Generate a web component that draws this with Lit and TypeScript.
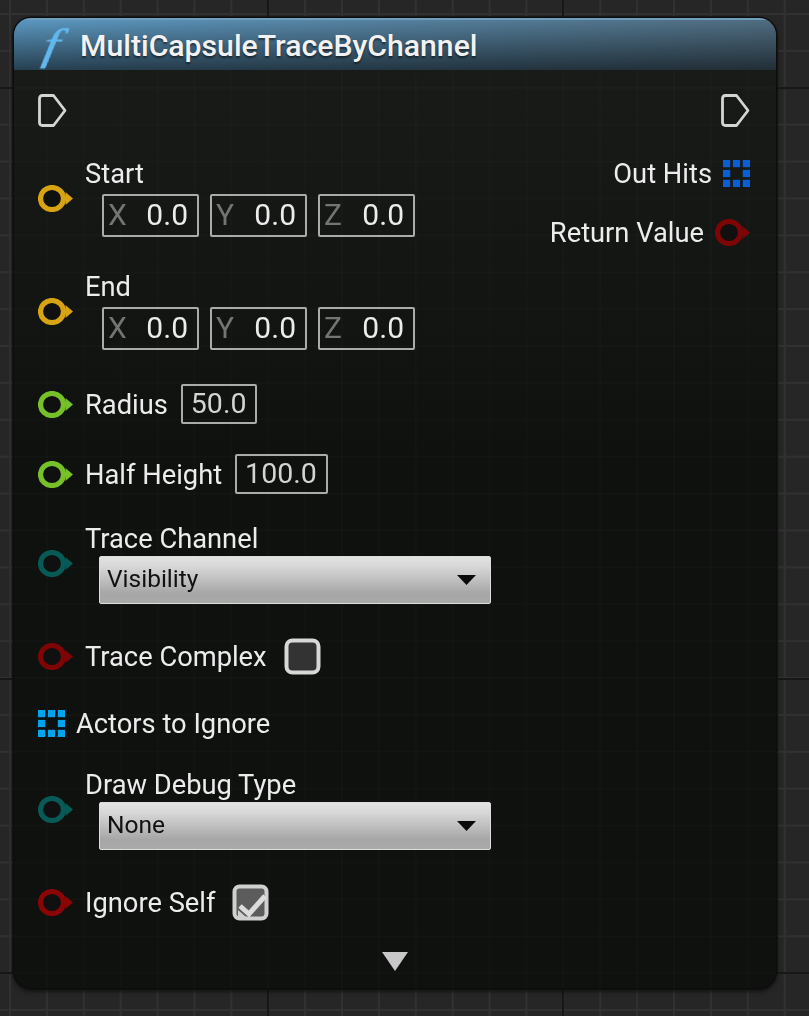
import { LitElement, html, css, svg } from 'lit'
import { customElement } from 'lit/decorators.js'

const execPin = html`
  <svg class="exec" viewBox="0 0 29 33">
    <path d="M4.5 1.5H15.5L27 16.5L15.5 31.5H4.5Q1.5 31.5 1.5 28.5V4.5Q1.5 1.5 4.5 1.5Z" fill="none" stroke="#d4d4d4" stroke-width="2.8" stroke-linejoin="round"/>
  </svg>`

const pin = (color: string) => html`
  <svg class="pin" viewBox="0 0 35 27">
    <path d="M27.5 7L35 13.5L27.5 20Z" fill="${color}"/>
    <ellipse cx="14" cy="13.5" rx="11.5" ry="11" fill="#0f100f" stroke="${color}" stroke-width="5.2"/>
  </svg>`

const arrayPin = (color: string) => {
  const cells = [[0, 0], [1, 0], [2, 0], [0, 1], [2, 1], [0, 2], [1, 2], [2, 2]]
  return html`
    <svg class="array" viewBox="0 0 27 27">
      ${cells.map(([c, r]) => svg`<rect x="${c * 9.9}" y="${r * 9.9}" width="7.2" height="7.2" fill="${color}"/>`)}
    </svg>`
}

@customElement('app-root')
export class AppRoot extends LitElement {
  static styles = css`
    :host {
      display: block;
      width: 809px;
      height: 1016px;
      overflow: hidden;
      font-family: Roboto, sans-serif;
      color: #ececec;
    }
    .canvas {
      height: 100%;
      box-sizing: border-box;
      padding: 18px 0 0 14px;
      background-color: #262626;
      background-image:
        linear-gradient(#171717 0 0), linear-gradient(#171717 0 0),
        linear-gradient(#171717 0 0), linear-gradient(#171717 0 0),
        linear-gradient(#171717 0 0),
        linear-gradient(90deg, #313131 2px, transparent 2px),
        linear-gradient(#313131 2px, transparent 2px);
      background-size: 2px 100%, 2px 100%, 100% 2px, 100% 2px, 100% 2px, 36.9px 36.9px, 36.9px 36.9px;
      background-position: 267px 0, 562px 0, 0 87px, 0 678px, 0 972px, 9px 0, 0 13px;
      background-repeat: no-repeat, no-repeat, no-repeat, no-repeat, no-repeat, repeat, repeat;
    }
    .node {
      width: 762px;
      height: 970px;
      box-sizing: border-box;
      display: flex;
      flex-direction: column;
      border-radius: 17px;
      overflow: hidden;
      background-color: #0f110f;
      background-image:
        linear-gradient(90deg, rgba(255, 255, 255, 0.012) 2px, transparent 2px),
        linear-gradient(rgba(255, 255, 255, 0.012) 2px, transparent 2px),
        linear-gradient(#1a1c1a, #0f110f 45%);
      background-size: 36.9px 36.9px, 36.9px 36.9px, auto;
      background-position: -5px 0, 0 -5px, 0 0;
      box-shadow: 0 0 0 1.5px #0d0d0d, 0 3px 5px #0d0d0d;
      filter: blur(0.5px);
    }
    .header {
      height: 52px;
      flex: none;
      display: flex;
      align-items: center;
      box-sizing: border-box;
      padding-left: 26px;
      border-top: 2px solid #6f9dbc;
      background:
        linear-gradient(rgba(0, 0, 0, 0), rgba(0, 0, 0, 0.58)),
        linear-gradient(90deg, #5b97c0, #54809e 50%, #4f6c80);
    }
    .fn {
      width: 40px;
      font: italic 44px 'Liberation Serif', serif;
      line-height: 44px;
      color: #62b8ee;
      display: block;
      transform: translateX(6px) skewX(-10deg) scaleX(1.3);
      transform-origin: 12px 30px;
      -webkit-text-stroke: 0.5px #62b8ee;
    }
    .title {
      font-size: 30.2px;
      font-weight: 500;
      color: #f2f2f2;
      text-shadow: 0 2px 2px rgba(0, 0, 0, 0.5);
    }
    .body {
      flex: 1;
      display: flex;
      justify-content: space-between;
      padding: 24px 26px 0 24px;
    }
    .col {
      display: flex;
      flex-direction: column;
    }
    .col.right {
      align-items: flex-end;
    }
    .exec {
      width: 29px;
      height: 33px;
      display: block;
    }
    .pin {
      width: 35px;
      height: 27px;
      flex: none;
      display: block;
    }
    .array {
      width: 27px;
      height: 27px;
      flex: none;
      display: block;
    }
    .row {
      display: flex;
      align-items: center;
      gap: 12px;
      font-size: 27.3px;
      line-height: 30px;
    }
    .row.top {
      align-items: flex-start;
    }
    .row.top .pin {
      margin-top: 27px;
    }
    .lbl {
      display: block;
      padding-top: 1px;
      margin-bottom: -1px;
    }
    .actors {
      gap: 11px;
      height: 30px;
    }
    .out {
      gap: 11px;
      height: 30px;
    }
    .g29 { margin-top: 29px; }
    .g30 { margin-top: 30px; }
    .g31 { margin-top: 31px; }
    .g33 { margin-top: 33px; }
    .g34 { margin-top: 34px; }
    .vec {
      display: flex;
      gap: 11px;
      margin: 6px 0 0 17px;
    }
    .field {
      box-sizing: border-box;
      height: 43px;
      width: 97px;
      padding: 0 9px 2px 4px;
      display: flex;
      justify-content: space-between;
      align-items: center;
      border: 2.5px solid #ababab;
      border-radius: 2px;
      font-size: 30px;
    }
    .field span:first-child {
      color: #747474;
    }
    .num {
      box-sizing: border-box;
      height: 40px;
      padding: 0 9px 0 8px;
      display: flex;
      align-items: center;
      border: 2.5px solid #ababab;
      border-radius: 2px;
      margin-left: 1px;
      font-size: 28.5px;
      color: #d4d4d4;
    }
    .select {
      box-sizing: border-box;
      width: 392px;
      height: 48px;
      margin: 3px 0 0 14px;
      padding: 0 14px 3px 7px;
      display: flex;
      justify-content: space-between;
      align-items: center;
      border: 1.5px solid #dcdcdc;
      border-radius: 2px;
      background: linear-gradient(#e2e2e2, #d8d8d8 20%, #a6a6a6 80%, #aaaaaa);
      color: #111;
      font-size: 24.5px;
    }
    .select svg {
      width: 19px;
      height: 10px;
      margin-top: 3px;
      display: block;
    }
    .box {
      width: 37px;
      height: 37px;
      display: block;
      flex: none;
      margin-left: 5px;
    }
    .expand {
      flex: none;
      display: flex;
      justify-content: center;
      padding-bottom: 17px;
    }
    .expand svg {
      width: 26px;
      height: 19px;
      display: block;
    }
  `

  private vector() {
    return html`
      <div class="vec">
        ${['X', 'Y', 'Z'].map(axis => html`
          <div class="field"><span>${axis}</span><span>0.0</span></div>
        `)}
      </div>`
  }

  private caret() {
    return html`<svg viewBox="0 0 19 10"><path d="M0 0H19L9.5 10Z" fill="#0a0a0a"/></svg>`
  }

  protected override render() {
    return html`
      <div class="canvas">
        <div class="node">
          <div class="header">
            <span class="fn">f</span>
            <span class="title">MultiCapsuleTraceByChannel</span>
          </div>
          <div class="body">
            <div class="col">
              ${execPin}
              <div class="row top g31">
                ${pin('#d8a312')}
                <div><span class="lbl">Start</span>${this.vector()}</div>
              </div>
              <div class="row top g34">
                ${pin('#d8a312')}
                <div><span class="lbl">End</span>${this.vector()}</div>
              </div>
              <div class="row g34">
                ${pin('#76c02a')}
                <span class="lbl">Radius</span>
                <div class="num">50.0</div>
              </div>
              <div class="row g30">
                ${pin('#76c02a')}
                <span class="lbl">Half Height</span>
                <div class="num">100.0</div>
              </div>
              <div class="row top g29">
                ${pin('#085a56')}
                <div>
                  <span class="lbl">Trace Channel</span>
                  <div class="select"><span>Visibility</span>${this.caret()}</div>
                </div>
              </div>
              <div class="row g34">
                ${pin('#7d0505')}
                <span>Trace Complex</span>
                <svg class="box" viewBox="0 0 37 37">
                  <rect x="2.5" y="2.5" width="32" height="32" rx="6" fill="#333" stroke="#d8d8d8" stroke-width="4"/>
                </svg>
              </div>
              <div class="row actors g33">
                ${arrayPin('#02a4ee')}
                <span class="lbl">Actors to Ignore</span>
              </div>
              <div class="row top g31">
                ${pin('#085a56')}
                <div>
                  <span class="lbl">Draw Debug Type</span>
                  <div class="select"><span>None</span>${this.caret()}</div>
                </div>
              </div>
              <div class="row g34">
                ${pin('#8a0505')}
                <span>Ignore Self</span>
                <svg class="box" viewBox="0 0 37 37">
                  <rect x="2.5" y="2.5" width="32" height="32" rx="5" fill="#5c5c5c" stroke="#d0d0d0" stroke-width="4"/>
                  <path d="M8 22L17 30L33 12" fill="none" stroke="#dcdcdc" stroke-width="5"/>
                  <path d="M6 26L14 33H6Z" fill="#d0d0d0"/>
                </svg>
              </div>
            </div>
            <div class="col right">
              ${execPin}
              <div class="row out g31">
                <span class="lbl">Out Hits</span>
                ${arrayPin('#0a5fd6')}
              </div>
              <div class="row out g29">
                <span class="lbl">Return Value</span>
                ${pin('#7d0505')}
              </div>
            </div>
          </div>
          <div class="expand">
            <svg viewBox="0 0 26 19"><path d="M0 0H26L13 19Z" fill="#c8c8c8"/></svg>
          </div>
        </div>
      </div>
    `
  }
}

declare global {
  interface HTMLElementTagNameMap {
    'app-root': AppRoot
  }
}
